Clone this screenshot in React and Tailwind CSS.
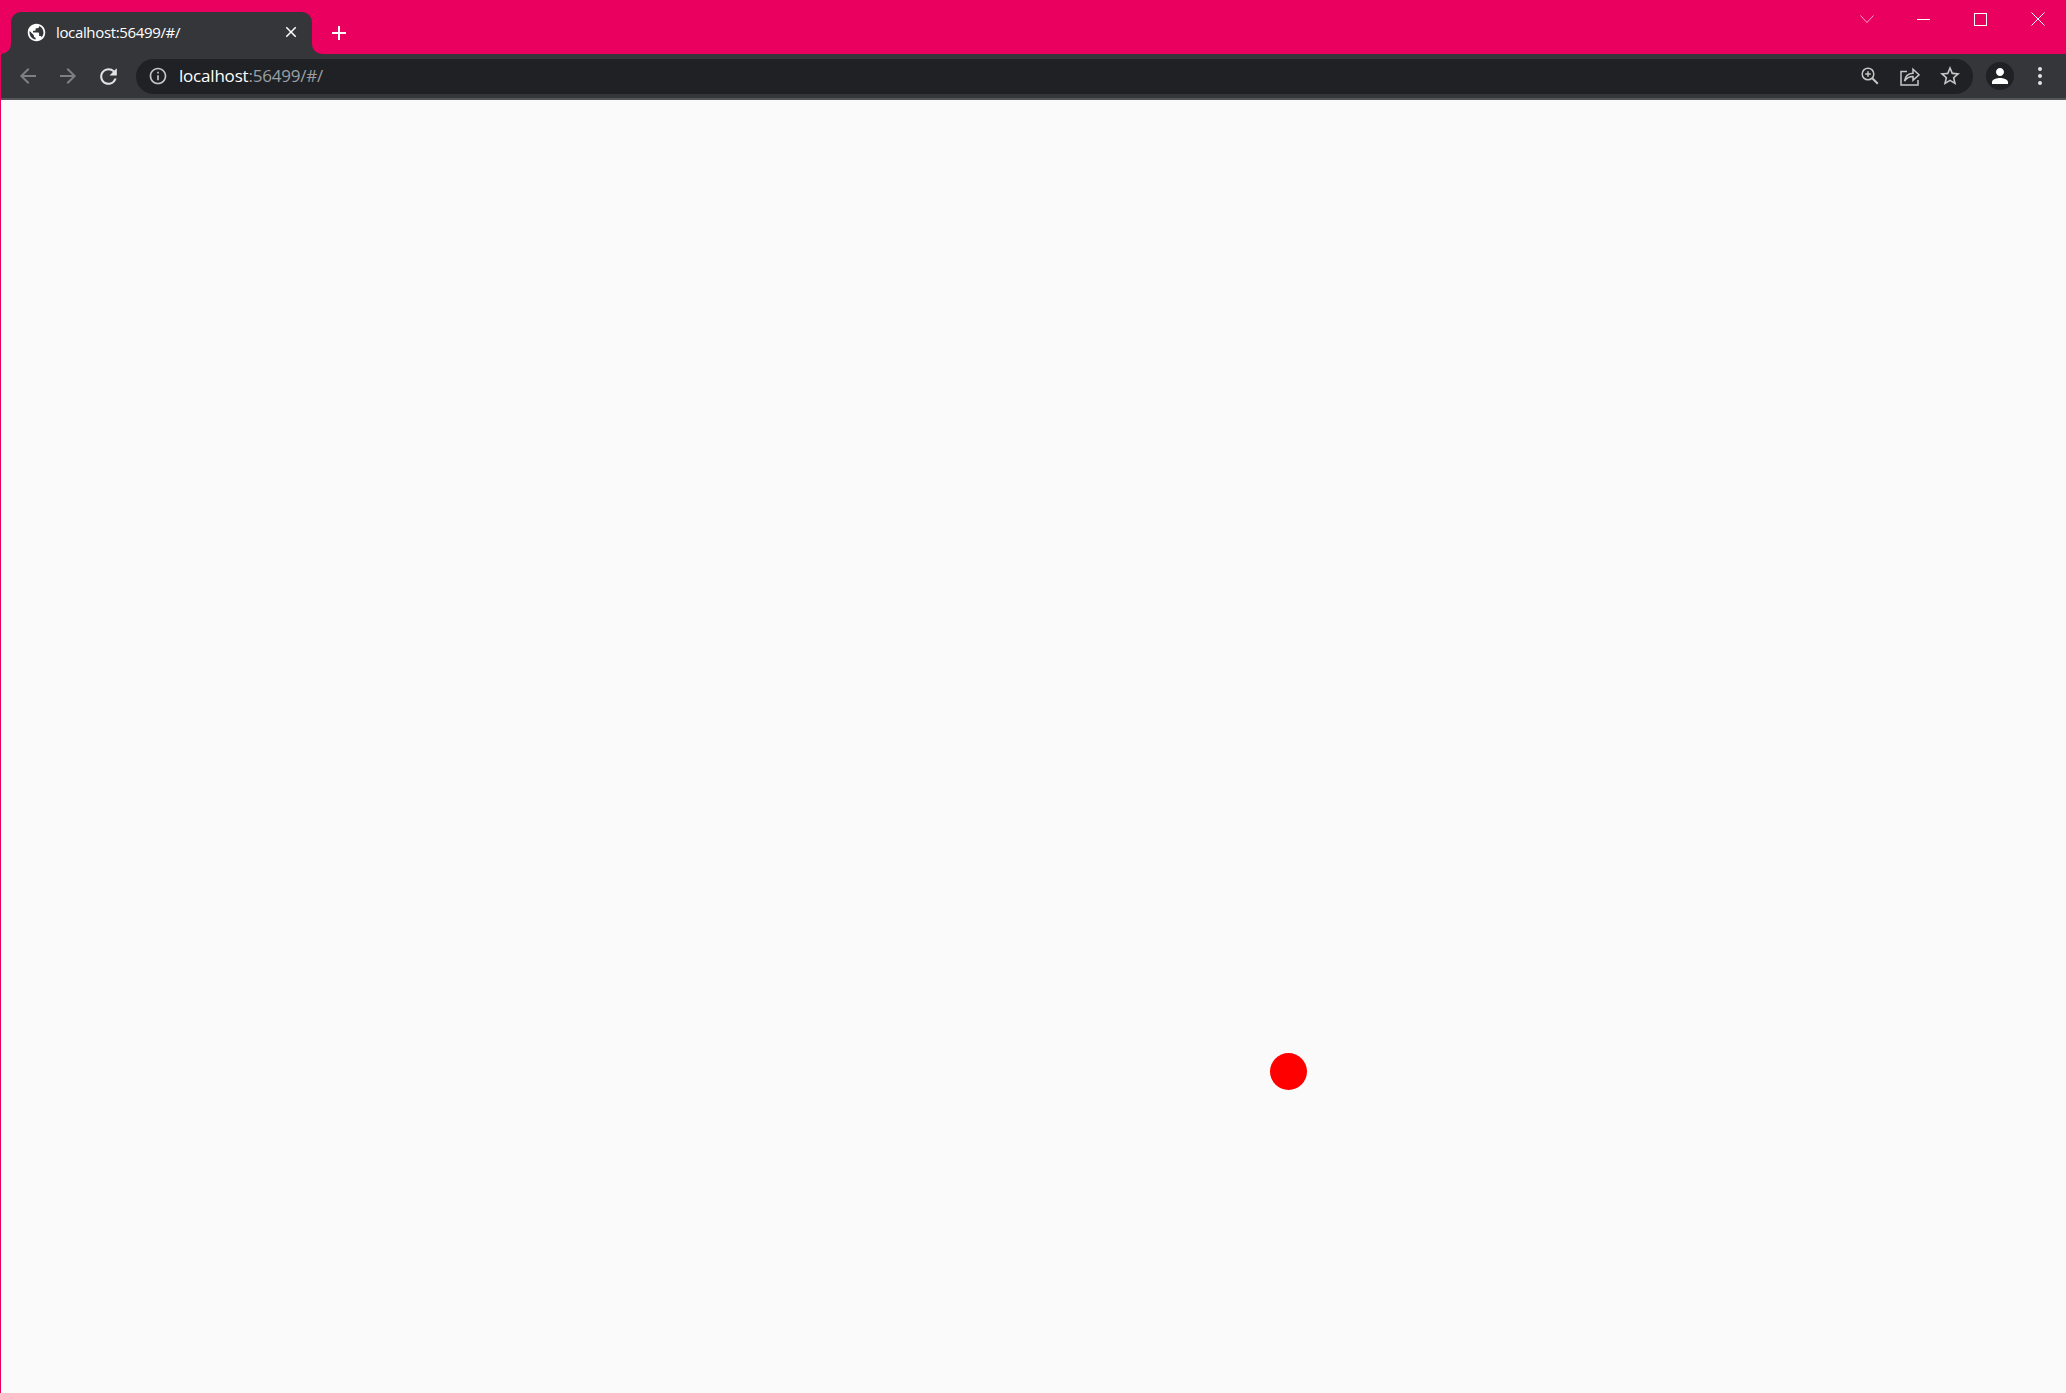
// material paths, same glyphs the browser chrome uses
function Icon({ d, size = 24, className = '' }) {
  return (
    <svg viewBox="0 0 24 24" fill="currentColor" width={size} height={size} className={`shrink-0 ${className}`}>
      <path fillRule="evenodd" d={d} />
    </svg>
  )
}

const globe = 'M12 2C6.48 2 2 6.48 2 12s4.48 10 10 10 10-4.48 10-10S17.52 2 12 2zm-1 17.93c-3.95-.49-7-3.85-7-7.93 0-.62.08-1.21.21-1.79L9 15v1c0 1.1.9 2 2 2v1.93zm6.9-2.54c-.26-.81-1-1.39-1.9-1.39h-1v-3c0-.55-.45-1-1-1H8v-2h2c.55 0 1-.45 1-1V7h2c1.1 0 2-.9 2-2v-.41c2.93 1.19 5 4.06 5 7.41 0 2.08-.8 3.97-2.1 5.39z'
const close = 'M19 6.41 17.59 5 12 10.59 6.41 5 5 6.41 10.59 12 5 17.59 6.41 19 12 13.41 17.59 19 19 17.59 13.41 12z'
const plus = 'M19 13h-6v6h-2v-6H5v-2h6V5h2v6h6v2z'
const back = 'M20 11H7.83l5.59-5.59L12 4l-8 8 8 8 1.41-1.41L7.83 13H20v-2z'
const forward = 'M12 4l-1.41 1.41L16.17 11H4v2h12.17l-5.58 5.59L12 20l8-8z'
const reload = 'M17.65 6.35A7.958 7.958 0 0 0 12 4c-4.42 0-7.99 3.58-7.99 8s3.57 8 7.99 8c3.73 0 6.84-2.55 7.73-6h-2.08A5.99 5.99 0 0 1 12 18c-3.31 0-6-2.69-6-6s2.69-6 6-6c1.66 0 3.14.69 4.22 1.78L13 11h7V4l-2.35 2.35z'
const info = 'M11 7h2v2h-2zm0 4h2v6h-2zm1-9C6.48 2 2 6.48 2 12s4.48 10 10 10 10-4.48 10-10S17.52 2 12 2zm0 18c-4.41 0-8-3.59-8-8s3.59-8 8-8 8 3.59 8 8-3.59 8-8 8z'
const star = 'M22 9.24l-7.19-.62L12 2 9.19 8.63 2 9.24l5.46 4.73L5.82 21 12 17.27 18.18 21l-1.63-7.03L22 9.24zM12 15.4l-3.76 2.27 1-4.28-3.32-2.88 4.38-.38L12 6.1l1.71 4.04 4.38.38-3.32 2.88 1 4.28L12 15.4z'
const person = 'M12 12c2.21 0 4-1.79 4-4s-1.79-4-4-4-4 1.79-4 4 1.79 4 4 4zm0 2c-2.67 0-8 1.34-8 4v2h16v-2c0-2.66-5.33-4-8-4z'

function Magnifier() {
  return (
    <svg viewBox="0 0 18 18" fill="none" stroke="currentColor" width="18" height="18" className="shrink-0">
      <circle cx="7" cy="7" r="5.800" strokeWidth="1.500" />
      <path d="M4.200 7h5.600M7 4.200v5.600" strokeWidth="1.500" />
      <path d="M11.300 11.300 16.800 16.800" strokeWidth="2" />
    </svg>
  )
}

function Share() {
  return (
    <svg viewBox="0 0 20 20" fill="none" stroke="currentColor" strokeWidth="1.5" width="20" height="20">
      <path d="M7 5.500H1v13.500h17v-5" />
      <path d="M4.500 15c.6-4.500 3.800-7.500 8.500-7.800V3.200l6 5.600-6 5.400v-3.800c-3.600 0-6.400 1.400-8.500 4.600Z" />
    </svg>
  )
}

function WindowButton({ children }) {
  return <div className="flex h-[38px] w-[57px] items-center justify-center">{children}</div>
}

export default function App() {
  return (
    <div className="flex h-[1393px] w-full flex-col overflow-hidden bg-[#ea005e] font-['Open_Sans',sans-serif]">
      <div className="flex h-[54px] shrink-0 items-end pl-[11px]">
        <div className="relative flex h-[42px] w-[301px] items-center rounded-t-[10px] bg-[#35363a] pb-[2px] pl-[15px] pr-[12px] text-white">
          <div className="absolute bottom-0 left-[-10px] h-[10px] w-[10px] bg-[#35363a]">
            <div className="h-full w-full rounded-br-[10px] bg-[#ea005e]" />
          </div>
          <div className="absolute bottom-0 right-[-10px] h-[10px] w-[10px] bg-[#35363a]">
            <div className="h-full w-full rounded-bl-[10px] bg-[#ea005e]" />
          </div>
          <Icon d={globe} size={21} />
          <span className="ml-[9px] flex-1 text-[15px] tracking-[-0.35px]">localhost:56499/#/</span>
          <Icon d={close} size={18} />
        </div>
        <div className="flex h-[42px] w-[53px] items-center justify-center text-white">
          <Icon d={plus} size={24} />
        </div>
        <div className="ml-auto flex h-[54px] items-start text-white">
          <WindowButton>
            <svg width="14" height="9" viewBox="0 0 14 9" fill="none" stroke="#f7a8c8" strokeWidth="1"><path d="M.5.500 7 7.500 13.500.500" /></svg>
          </WindowButton>
          <WindowButton>
            <div className="h-px w-[13px] bg-white" />
          </WindowButton>
          <WindowButton>
            <div className="h-[13px] w-[13px] border border-white" />
          </WindowButton>
          <WindowButton>
            <svg width="14" height="14" viewBox="0 0 14 14" fill="none" stroke="#fff" strokeWidth="1"><path d="M.5.500l13 13M13.500.500l-13 13" /></svg>
          </WindowButton>
        </div>
      </div>
      <div className="ml-px flex h-[46px] shrink-0 items-center border-b-[2px] border-[#55565a] bg-[#35363a]">
        <div className="flex w-[135px] items-center pl-[7px]">
          <div className="flex w-[40px] justify-center text-[#7f8083]"><Icon d={back} /></div>
          <div className="flex w-[40px] justify-center text-[#7f8083]"><Icon d={forward} /></div>
          <div className="flex w-[40px] justify-center text-[#e3e3e3]"><Icon d={reload} size={25} /></div>
        </div>
        <div className="flex h-[35px] flex-1 items-center rounded-full bg-[#202124] pl-[12px] pr-[3px] text-[#c4c7c5]">
          <Icon d={info} size={20} />
          <span className="ml-[11px] flex-1 text-[17px] tracking-[-0.2px] text-white">localhost<span className="text-[#9aa0a6]">:56499/#/</span></span>
          <div className="flex w-[40px] justify-center"><Magnifier /></div>
          <div className="flex w-[40px] justify-center"><Share /></div>
          <div className="flex w-[40px] justify-center"><Icon d={star} size={24} /></div>
        </div>
        <div className="ml-[13px] flex h-[28px] w-[28px] items-center justify-center rounded-full bg-[#202124] text-white">
          <Icon d={person} size={24} />
        </div>
        <div className="flex w-[52px] flex-col items-center gap-[3px]">
          <div className="h-[4px] w-[4px] rounded-full bg-[#e3e3e3]" />
          <div className="h-[4px] w-[4px] rounded-full bg-[#e3e3e3]" />
          <div className="h-[4px] w-[4px] rounded-full bg-[#e3e3e3]" />
        </div>
      </div>
      <div className="relative ml-px flex-1 bg-[#fafafa]">
        <div className="absolute left-[1269px] top-[953px] h-[37px] w-[37px] rounded-full bg-[#ff0000]" />
      </div>
    </div>
  )
}
